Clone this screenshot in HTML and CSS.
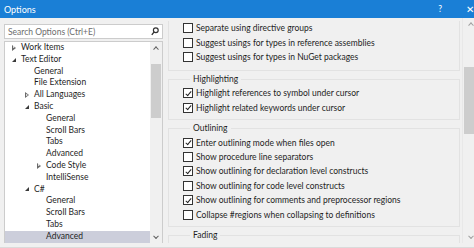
FILE: index.html
```html
<!DOCTYPE html>
<html lang="en">
<head>
    <meta charset="UTF-8">
    <title>Options</title>
    <link rel="stylesheet" href="styles.css">
</head>
<body>
    <div class="window">
        <div class="titlebar">
            <span class="title">Options</span>
            <span class="help">?</span>
            <span class="close">&#x2715;</span>
        </div>
        <div class="main">
            <div class="left">
                <div class="search">
                    <span class="placeholder">Search Options (Ctrl+E)</span>
                    <svg class="search-icon" width="8" height="9" viewBox="0 0 8 9">
                        <circle cx="4.8" cy="3.2" r="2.4" fill="none" stroke="#333" stroke-width="1.2"/>
                        <line x1="3.2" y1="4.9" x2="0.8" y2="7.9" stroke="#333" stroke-width="1.4"/>
                    </svg>
                </div>
                <div class="tree">
                    <ul class="nodes">
                        <li class="node l0"><span class="exp closed"></span>Work Items</li>
                        <li class="node l0"><span class="exp open"></span>Text Editor</li>
                        <li class="node l1"><span class="exp"></span>General</li>
                        <li class="node l1"><span class="exp"></span>File Extension</li>
                        <li class="node l1"><span class="exp closed"></span>All Languages</li>
                        <li class="node l1"><span class="exp open"></span>Basic</li>
                        <li class="node l2"><span class="exp"></span>General</li>
                        <li class="node l2"><span class="exp"></span>Scroll Bars</li>
                        <li class="node l2"><span class="exp"></span>Tabs</li>
                        <li class="node l2"><span class="exp"></span>Advanced</li>
                        <li class="node l2"><span class="exp closed"></span>Code Style</li>
                        <li class="node l2"><span class="exp"></span>IntelliSense</li>
                        <li class="node l1"><span class="exp open"></span>C#</li>
                        <li class="node l2"><span class="exp"></span>General</li>
                        <li class="node l2"><span class="exp"></span>Scroll Bars</li>
                        <li class="node l2"><span class="exp"></span>Tabs</li>
                        <li class="node l2 selected"><span class="exp"></span>Advanced</li>
                    </ul>
                    <div class="vscroll tree-scroll">
                        <span class="arrow up"></span>
                        <div class="track"><div class="thumb"></div></div>
                        <span class="arrow down"></span>
                    </div>
                </div>
            </div>
            <div class="right">
                <div class="content">
                    <div class="group cut">
                        <label class="check"><span class="box"></span>Separate using directive groups</label>
                        <label class="check"><span class="box"></span>Suggest usings for types in reference assemblies</label>
                        <label class="check"><span class="box"></span>Suggest usings for types in NuGet packages</label>
                    </div>
                    <fieldset class="group">
                        <legend>Highlighting</legend>
                        <label class="check"><span class="box on"></span>Highlight references to symbol under cursor</label>
                        <label class="check"><span class="box on"></span>Highlight related keywords under cursor</label>
                    </fieldset>
                    <fieldset class="group">
                        <legend>Outlining</legend>
                        <label class="check"><span class="box on"></span>Enter outlining mode when files open</label>
                        <label class="check"><span class="box"></span>Show procedure line separators</label>
                        <label class="check"><span class="box on"></span>Show outlining for declaration level constructs</label>
                        <label class="check"><span class="box"></span>Show outlining for code level constructs</label>
                        <label class="check"><span class="box on"></span>Show outlining for comments and preprocessor regions</label>
                        <label class="check"><span class="box"></span>Collapse #regions when collapsing to definitions</label>
                    </fieldset>
                    <fieldset class="group">
                        <legend>Fading</legend>
                    </fieldset>
                </div>
                <div class="vscroll main-scroll">
                    <span class="arrow up"></span>
                    <div class="track"><div class="thumb"></div></div>
                    <span class="arrow down"></span>
                </div>
            </div>
        </div>
    </div>
</body>
</html>
```

FILE: styles.css
```css
html, body {
    margin: 0;
    padding: 0;
    overflow: hidden;
}
body {
    font-family: Lato, "Noto Sans", sans-serif;
    font-size: 8.5px;
    color: #1e1e1e;
    background: #f0f0f0;
}
.window {
    width: 478px;
    height: 248px;
    display: flex;
    flex-direction: column;
    background: #f0f0f0;
}
.titlebar {
    height: 18px;
    flex: none;
    display: flex;
    align-items: center;
    background: #1a7fd6;
    color: #fff;
    font-size: 9px;
}
.title {
    margin-left: 4px;
    flex: 1;
}
.help {
    font-size: 8.5px;
    margin-right: 24px;
}
.close {
    font-size: 10px;
    margin-right: 4px;
}
.main {
    flex: 1;
    min-height: 0;
    display: flex;
    gap: 3px;
    padding: 0 0 4px 4px;
    border-bottom: 1px solid #dadada;
}
.left {
    width: 159px;
    flex: none;
    display: flex;
    flex-direction: column;
}
.search {
    margin-top: 6px;
    height: 15px;
    box-sizing: border-box;
    border: 1px solid #cccccc;
    background: #fff;
    display: flex;
    align-items: center;
    padding: 0 3px 0 3px;
}
.placeholder {
    flex: 1;
    color: #6d6d6d;
}
.search-icon {
    display: block;
}
.tree {
    margin-top: 2px;
    flex: 1;
    min-height: 0;
    display: flex;
    border: 1px solid #cccccc;
    border-bottom: none;
    background: #fff;
    overflow: hidden;
}
.nodes {
    list-style: none;
    margin: 0;
    padding: 0;
    flex: 1;
}
.node {
    height: 11.8px;
    line-height: 11.8px;
    display: flex;
    align-items: center;
    white-space: nowrap;
}
.node.l0 { padding-left: 7px; }
.node.l1 { padding-left: 20px; }
.node.l2 { padding-left: 32px; }
.node.selected {
    background: #cccedb;
}
.exp {
    width: 9px;
    height: 8px;
    flex: none;
    position: relative;
}
.exp.closed::before {
    content: "";
    position: absolute;
    left: 0;
    top: 1px;
    border-style: solid;
    border-width: 3px 0 3px 4px;
    border-color: transparent transparent transparent #6a6a6a;
}
.exp.closed::after {
    content: "";
    position: absolute;
    left: 1px;
    top: 2.5px;
    border-style: solid;
    border-width: 1.5px 0 1.5px 2px;
    border-color: transparent transparent transparent #fff;
}
.exp.open::before {
    content: "";
    position: absolute;
    left: 0;
    top: 2px;
    border-style: solid;
    border-width: 0 0 4px 4px;
    border-color: transparent transparent #3a3a3a transparent;
}
.vscroll {
    flex: none;
    display: flex;
    flex-direction: column;
    align-items: center;
    background: #f0f0f0;
}
.tree-scroll {
    width: 12px;
}
.main-scroll {
    width: 15px;
    border-left: 1px solid #e8e8e8;
}
.track {
    flex: 1;
    width: 100%;
    position: relative;
}
.thumb {
    position: absolute;
    left: 1px;
    right: 1px;
    background: #cdcdcd;
}
.tree-scroll .thumb {
    top: 10px;
    height: 54px;
}
.main-scroll .thumb {
    top: 37px;
    height: 67px;
}
.arrow {
    height: 12px;
    width: 100%;
    position: relative;
    flex: none;
}
.arrow::before {
    content: "";
    position: absolute;
    left: 50%;
    top: 50%;
    width: 3px;
    height: 3px;
    border-left: 1px solid #606060;
    border-top: 1px solid #606060;
    transform: translate(-50%, -20%) rotate(45deg);
}
.arrow.down::before {
    transform: translate(-50%, -70%) rotate(225deg);
}
.main-scroll .arrow::before {
    border-color: #a0a0a0;
}
.right {
    flex: 1;
    min-width: 0;
    display: flex;
}
.content {
    flex: 1;
    min-width: 0;
    padding-top: 3px;
    overflow: hidden;
}
.group {
    margin: 0 2px 1px 2px;
    padding: 0 0 4.5px 14px;
    border: 1px solid #e2e2e2;
    min-width: 0;
}
.group.cut {
    border-top: none;
    padding-bottom: 6px;
}
legend {
    margin-left: 7px;
    padding: 0 3px;
    line-height: 14px;
}
.check {
    height: 14.4px;
    display: flex;
    align-items: center;
    white-space: nowrap;
}
.box {
    width: 8px;
    height: 8px;
    border: 1px solid #333;
    background: #fff;
    margin-right: 3px;
    flex: none;
    position: relative;
}
.box.on::after {
    content: "";
    position: absolute;
    left: 2.5px;
    top: 0.5px;
    width: 2px;
    height: 5px;
    border-right: 1.3px solid #222;
    border-bottom: 1.3px solid #222;
    transform: rotate(40deg);
}
```
